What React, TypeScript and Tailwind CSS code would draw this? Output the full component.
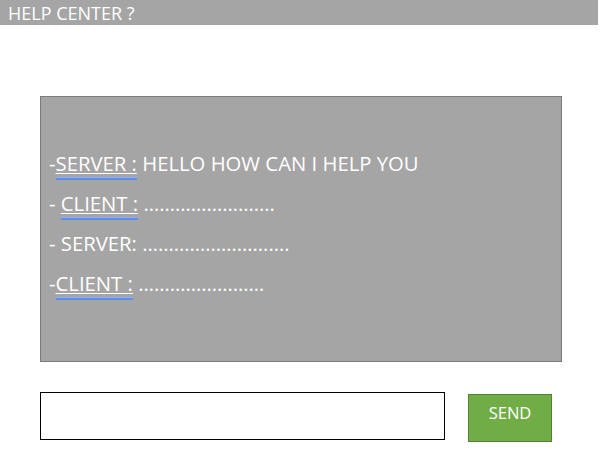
import React, { useState } from 'react';

type Line = {
    prefix: string;
    who: string;
    underlined: boolean;
    text: string;
};

const lines: Line[] = [
    { prefix: '-', who: 'SERVER :', underlined: true, text: ' HELLO HOW CAN I HELP YOU' },
    { prefix: '- ', who: 'CLIENT :', underlined: true, text: ' …………………….' },
    { prefix: '- ', who: 'SERVER:', underlined: false, text: ' ……………………….' },
    { prefix: '-', who: 'CLIENT :', underlined: true, text: ' ……………………' },
];

const App: React.FC = () => {
    const [message, setMessage] = useState('');

    return (
        <div className="w-[602px] h-[452px] bg-white font-['Open_Sans',sans-serif] text-white">
            <div className="w-[598px] h-[25px] bg-[#a5a5a5] flex items-center pl-[8px] text-[18px] leading-none">
                HELP CENTER ?
            </div>

            <div className="ml-[40px] mt-[71px] w-[522px] h-[266px] bg-[#a5a5a5] border border-[#7b7b7b] pt-[46px] pl-[8px]">
                {lines.map((line, i) => (
                    <div key={i} className="leading-[40px] text-[20.3px] whitespace-pre">
                        {line.prefix}
                        {line.underlined ? (
                            <span className="underline decoration-white decoration-1 underline-offset-[2px] [box-shadow:0_1px_0_#8fb0f0,0_3px_0_#5b8ef0]">
                                {line.who}
                            </span>
                        ) : (
                            <span>{line.who}</span>
                        )}
                        {line.text}
                    </div>
                ))}
            </div>

            <div className="flex items-start ml-[40px] mt-[30px]">
                <input
                    type="text"
                    value={message}
                    onChange={(e) => setMessage(e.target.value)}
                    className="w-[405px] h-[48px] border border-black bg-white px-2 text-black outline-none"
                />
                <button
                    type="button"
                    className="ml-[23px] mt-[2px] w-[84px] h-[48px] bg-[#70ad47] border border-[#548235] text-[16.5px] text-white flex items-center justify-center pb-[10px]"
                >
                    SEND
                </button>
            </div>
        </div>
    );
};

export default App;
